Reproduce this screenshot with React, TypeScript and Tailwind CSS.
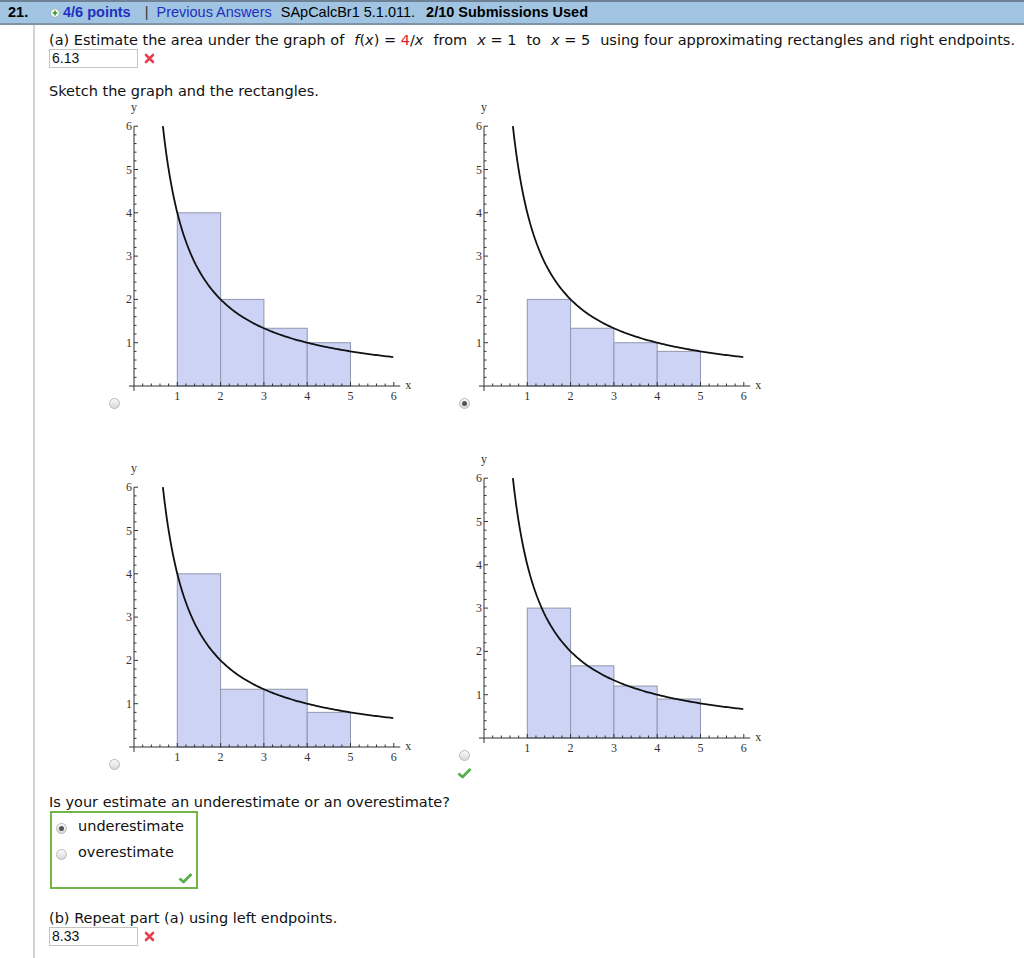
import React from "react";

const U = 43.3;
const OX = 29;
const OY = 286;

type ChartProps = {
  heights: number[];
  selected?: boolean;
  correct?: boolean;
};

function Radio({ checked }: { checked?: boolean }) {
  return (
    <span className="flex w-[11px] h-[11px] shrink-0 items-center justify-center rounded-full border border-[#b9b9b9] bg-gradient-to-b from-[#fafafa] to-[#d9d9d9]">
      {checked && <span className="w-[5px] h-[5px] rounded-full bg-[#555]" />}
    </span>
  );
}

function RedX() {
  return (
    <svg width="11" height="11" viewBox="0 0 11 11" className="block shrink-0">
      <path d="M2 2 L9 9 M9 2 L2 9" stroke="#e4424f" strokeWidth="2.6" strokeLinecap="round" />
    </svg>
  );
}

function Check() {
  return (
    <svg width="15" height="12" viewBox="0 0 15 12" className="block shrink-0">
      <path d="M1.5 6.5 L5.5 10 L13.5 2" fill="none" stroke="#55b04a" strokeWidth="2.8" strokeLinejoin="round" />
    </svg>
  );
}

function Chart({ heights, selected, correct }: ChartProps) {
  const ticksX: React.ReactNode[] = [];
  for (let i = 1; i <= 30; i++) {
    const major = i % 5 === 0;
    const x = OX + (i / 5) * U;
    ticksX.push(<line key={"tx" + i} x1={x} x2={x} y1={OY} y2={OY - (major ? 4 : 2.5)} stroke="#333" strokeWidth="1" />);
  }
  const ticksY: React.ReactNode[] = [];
  for (let i = 1; i <= 30; i++) {
    const major = i % 5 === 0;
    const y = OY - (i / 5) * U;
    ticksY.push(<line key={"ty" + i} x1={OX} x2={OX + (major ? 4 : 2.5)} y1={y} y2={y} stroke="#333" strokeWidth="1" />);
  }
  const pts: string[] = [];
  for (let x = 2 / 3; x <= 6.001; x += 0.04) {
    pts.push(`${(OX + x * U).toFixed(2)},${(OY - (4 / x) * U).toFixed(2)}`);
  }
  return (
    <div className="flex flex-col">
      <svg width="320" height="298" className="block overflow-visible" style={{ fontFamily: "'Liberation Serif', serif" }}>
        {heights.map((h, i) => (
          <rect
            key={i}
            x={OX + (i + 1) * U}
            y={OY - h * U}
            width={U}
            height={h * U}
            fill="#cdd3f4"
            stroke="#9197ae"
            strokeWidth="1"
          />
        ))}
        <line x1={OX - 5} x2={OX + 6.15 * U} y1={OY} y2={OY} stroke="#333" strokeWidth="1" />
        <line x1={OX} x2={OX} y1={OY + 5} y2={OY - 6 * U} stroke="#333" strokeWidth="1" />
        {ticksX}
        {ticksY}
        {[1, 2, 3, 4, 5, 6].map((k) => (
          <text key={"lx" + k} x={OX + k * U} y={OY + 14} fontSize="12" fill="#333" textAnchor="middle">
            {k}
          </text>
        ))}
        {[1, 2, 3, 4, 5, 6].map((k) => (
          <text key={"ly" + k} x={OX - 2} y={OY - k * U + 4} fontSize="12" fill="#333" textAnchor="end">
            {k}
          </text>
        ))}
        <text x={OX + 6.15 * U + 8} y={OY + 3} fontSize="12" fill="#333" textAnchor="middle">
          x
        </text>
        <text x={OX} y={11} fontSize="12" fill="#333" textAnchor="middle">
          y
        </text>
        <polyline points={pts.join(" ")} fill="none" stroke="#111" strokeWidth="1.8" />
      </svg>
      <div className="flex ml-[4px]">
        <Radio checked={selected} />
      </div>
      {correct && (
        <div className="flex mt-[6px] ml-[2px]">
          <Check />
        </div>
      )}
    </div>
  );
}

function AnswerBox({ value }: { value: string }) {
  return (
    <div className="flex items-center">
      <div
        className="w-[89px] h-[19px] border border-[#c4c4c4] px-[2px] text-[14px] leading-[17px] text-[#111]"
        style={{ fontFamily: "'Liberation Sans', Arial, sans-serif" }}
      >
        {value}
      </div>
      <div className="ml-[6px]">
        <RedX />
      </div>
    </div>
  );
}

export default function App() {
  return (
    <div className="w-[1024px] min-h-[958px] bg-white text-[#111]">
      <header
        className="h-[25px] flex items-center bg-[#a0c4e1] border-t-2 border-t-[#6f8295] border-b-2 border-b-[#7f93a8] text-[14.5px] text-black"
        style={{ fontFamily: "'Liberation Sans', Arial, sans-serif" }}
      >
        <span className="ml-[8px] font-bold w-[42px]">21.</span>
        <svg width="10" height="10" viewBox="0 0 10 10" className="mr-[3px]">
          <circle cx="5" cy="5" r="4.3" fill="#fff" stroke="#9aa" strokeWidth="0.8" />
          <path d="M5 2.6 V7.4 M2.6 5 H7.4" stroke="#2e9a2e" strokeWidth="1.6" />
        </svg>
        <span className="font-bold text-[#1f2fc0]">4/6 points</span>
        <span className="ml-[14px] mr-[8px] text-[#333]">|</span>
        <span className="text-[#1f2fc0]">Previous Answers</span>
        <span className="ml-[9px]">SApCalcBr1 5.1.011.</span>
        <span className="ml-[11px] font-bold">2/10 Submissions Used</span>
      </header>
      <div
        className="ml-[33px] border-l-2 border-[#d2d2d2] pl-[14px] pt-[6px] min-h-[933px] text-[14.5px] leading-[18px]"
        style={{ fontFamily: "'DejaVu Sans', Verdana, sans-serif" }}
      >
        <p className="whitespace-nowrap">
          (a) Estimate the area under the graph of
          <span className="mx-[10px]">
            <i>f</i>(<i>x</i>) = <span className="text-[#e3202c]">4</span>/<i>x</i>
          </span>
          from
          <span className="mx-[10px]">
            <i>x</i> = 1
          </span>
          to
          <span className="mx-[10px]">
            <i>x</i> = 5
          </span>
          using four approximating rectangles and right endpoints.
        </p>
        <AnswerBox value="6.13" />
        <p className="mt-[14px]">Sketch the graph and the rectangles.</p>
        <div className="ml-[56px] grid grid-cols-[350px_350px] gap-y-[43px] items-center">
          <Chart heights={[4, 2, 4 / 3, 1]} />
          <Chart heights={[2, 4 / 3, 1, 0.8]} selected />
          <Chart heights={[4, 4 / 3, 4 / 3, 0.8]} />
          <Chart heights={[3, 5 / 3, 1.2, 0.9]} correct />
        </div>
        <p className="mt-[14px]">Is your estimate an underestimate or an overestimate?</p>
        <div className="ml-px w-[148px] h-[78px] border-2 border-[#72b445] flex flex-col">
          <div className="h-[26px] flex items-center pl-[4px]">
            <span className="mt-[5px]">
              <Radio checked />
            </span>
            <span className="ml-[11px]">underestimate</span>
          </div>
          <div className="h-[26px] flex items-center pl-[4px]">
            <span className="mt-[5px]">
              <Radio />
            </span>
            <span className="ml-[11px]">overestimate</span>
          </div>
          <div className="mt-auto flex justify-end pr-[3px] pb-[3px]">
            <Check />
          </div>
        </div>
        <p className="mt-[20px]">(b) Repeat part (a) using left endpoints.</p>
        <AnswerBox value="8.33" />
      </div>
    </div>
  );
}
